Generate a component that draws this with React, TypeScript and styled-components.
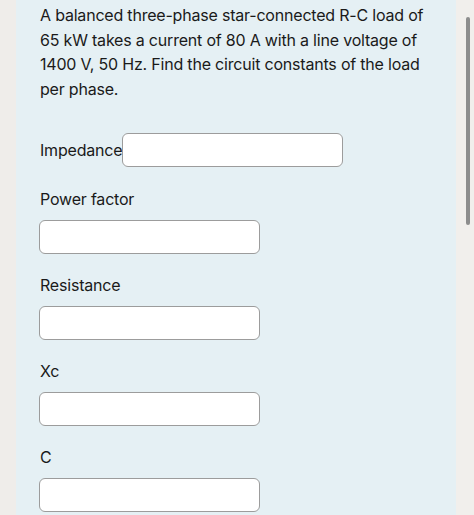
import React from "react";
import styled, { createGlobalStyle } from "styled-components";

const GlobalStyle = createGlobalStyle`
  html, body {
    margin: 0;
    padding: 0;
    background: #efedea;
  }
  body {
    font-family: Inter, "Liberation Sans", Arial, sans-serif;
    -webkit-font-smoothing: antialiased;
  }
`;

const Page = styled.div`
  display: flex;
  height: 515px;
  overflow: hidden;
  padding-left: 16px;
  box-sizing: border-box;
`;

const Panel = styled.div`
  display: flex;
  flex-direction: column;
  width: 440px;
  flex-shrink: 0;
  background: #e5f0f4;
  padding: 3px 24px 0;
  box-sizing: border-box;
  color: #1a1a1a;
  font-size: 16px;
  letter-spacing: -0.2px;
`;

const Question = styled.p`
  margin: 0;
  line-height: 24.5px;
  white-space: nowrap;
`;

const InlineField = styled.div`
  display: flex;
  align-items: center;
  margin: 32px 0 1px;
  height: 34px;
  flex-shrink: 0;
`;

const Field = styled.div`
  display: flex;
  flex-direction: column;
  align-items: flex-start;
  margin-top: 19px;
  flex-shrink: 0;
`;

const Label = styled.label`
  line-height: 24px;
`;

const Input = styled.input<{ $width: number }>`
  width: ${({ $width }) => $width}px;
  height: 34px;
  box-sizing: border-box;
  border: 1.5px solid #9c9c9c;
  border-radius: 6px;
  background: #fff;
  padding: 0 8px;
  font: inherit;
  outline: none;
`;

const StackedInput = styled(Input)`
  margin-top: 9px;
  margin-left: -1px;
`;

const Gutter = styled.div`
  flex: 1;
  display: flex;
  justify-content: flex-start;
  padding-left: 10px;
  background: #f1efec;
`;

const Thumb = styled.div`
  width: 4px;
  height: 208px;
  margin-top: 17px;
  border-radius: 2px;
  background: #8d8d8d;
`;

const fields = ["Power factor", "Resistance", "Xc", "C"];

export default function App() {
  return (
    <>
      <GlobalStyle />
      <Page>
        <Panel>
          <Question>
            A balanced three-phase star-connected R-C load of
            <br />
            65 kW takes a current of 80 A with a line voltage of
            <br />
            1400 V, 50 Hz. Find the circuit constants of the load
            <br />
            per phase.
          </Question>
          <InlineField>
            <Label>Impedance</Label>
            <Input $width={221} />
          </InlineField>
          {fields.map((f) => (
            <Field key={f}>
              <Label>{f}</Label>
              <StackedInput $width={221} />
            </Field>
          ))}
        </Panel>
        <Gutter>
          <Thumb />
        </Gutter>
      </Page>
    </>
  );
}
